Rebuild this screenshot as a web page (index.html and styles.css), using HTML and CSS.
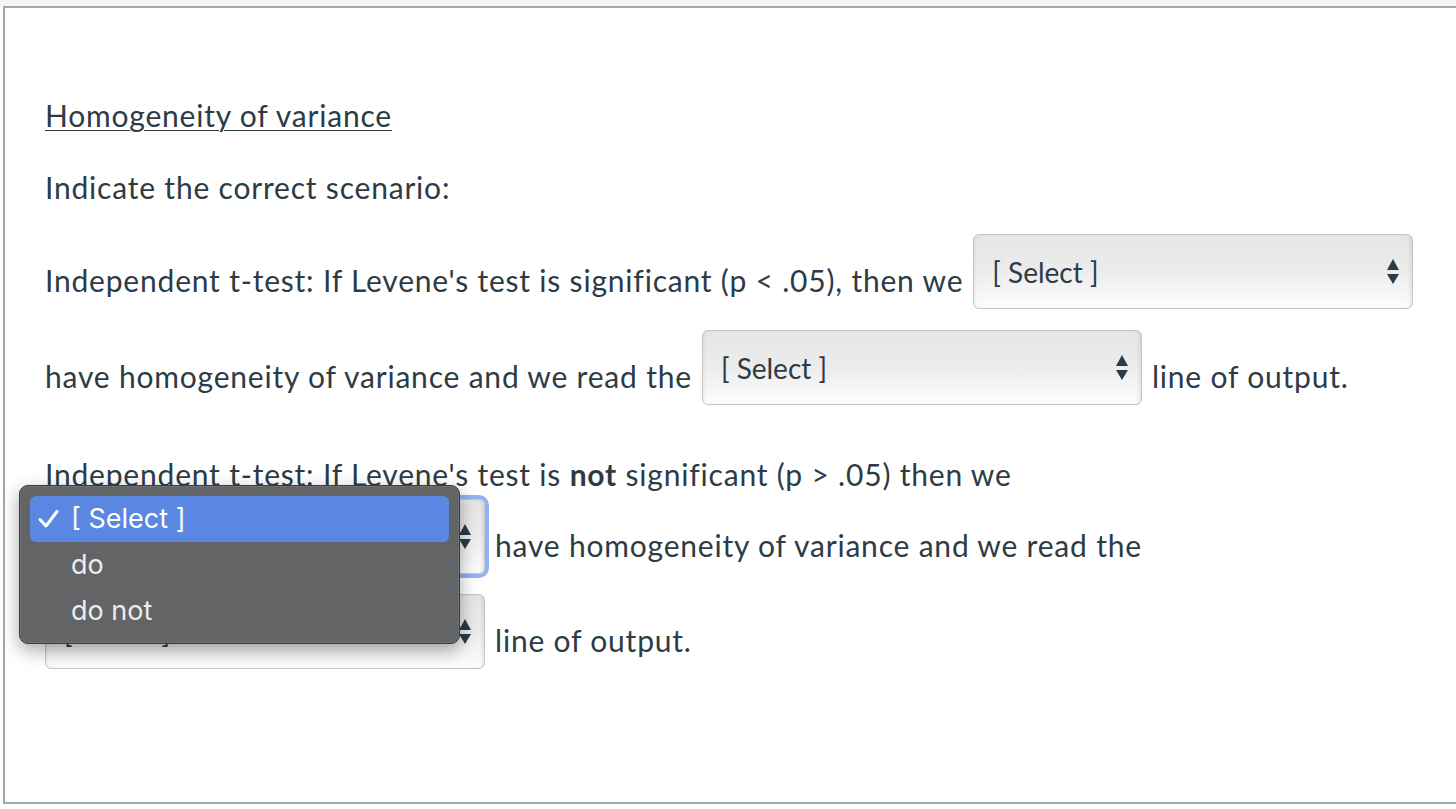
FILE: index.html
```html
<!DOCTYPE html>
<html lang="en">
<head>
<meta charset="utf-8">
<title>Homogeneity of variance</title>
<link rel="stylesheet" href="styles.css">
</head>
<body>
<div class="topbar"></div>
<div class="frame">
  <p class="heading"><span class="underline">Homogeneity of variance</span></p>
  <p class="text intro">Indicate the correct scenario:</p>

  <div class="question q1">
    <div class="row">
      <span class="txt">Independent t-test: If Levene's test is significant (p &lt; .05), then we</span>
      <div class="select">
        <span class="sel-label">[ Select ]</span>
        <svg class="arrows" width="12" height="26" viewBox="0 0 12 26"><polygon points="6,0 12,11 0,11"/><polygon points="0,15 12,15 6,25"/></svg>
      </div>
    </div>
    <div class="row">
      <span class="txt">have homogeneity of variance and we read the</span>
      <div class="select">
        <span class="sel-label">[ Select ]</span>
        <svg class="arrows" width="12" height="26" viewBox="0 0 12 26"><polygon points="6,0 12,11 0,11"/><polygon points="0,15 12,15 6,25"/></svg>
      </div>
      <span class="txt">line of output.</span>
    </div>
  </div>

  <div class="question q2">
    <p class="text line">Independent t-test: If Levene's test is <strong>not</strong> significant (p &gt; .05) then we</p>
    <div class="row">
      <div class="select focused">
        <span class="sel-label">[ Select ]</span>
        <svg class="arrows" width="12" height="26" viewBox="0 0 12 26"><polygon points="6,0 12,11 0,11"/><polygon points="0,15 12,15 6,25"/></svg>
        <div class="popup">
          <div class="opt active"><span class="check"><svg width="21" height="20" viewBox="0 0 21 20"><polyline points="2,10.5 8,17 19,2.5"/></svg></span><span>[ Select ]</span></div>
          <div class="opt"><span class="check"></span><span>do</span></div>
          <div class="opt"><span class="check"></span><span>do not</span></div>
        </div>
      </div>
      <span class="txt">have homogeneity of variance and we read the</span>
    </div>
    <div class="row">
      <div class="select">
        <span class="sel-label">[ Select ]</span>
        <svg class="arrows" width="12" height="26" viewBox="0 0 12 26"><polygon points="6,0 12,11 0,11"/><polygon points="0,15 12,15 6,25"/></svg>
      </div>
      <span class="txt">line of output.</span>
    </div>
  </div>
</div>
</body>
</html>
```
FILE: styles.css
```css
html, body {
  margin: 0;
  padding: 0;
  background: #ffffff;
}

body {
  font-family: Lato, "Helvetica Neue", Arial, sans-serif;
  font-size: 30px;
  letter-spacing: 0.8px;
  line-height: 44px;
  color: #2d3b45;
}

.topbar {
  height: 6px;
  background: #f4f4f4;
}

.frame {
  box-sizing: border-box;
  height: 798px;
  margin-left: 3px;
  border: 2px solid #a6a6a6;
  border-right: none;
  padding: 85px 0 0 40px;
}

p {
  margin: 0;
}

.underline {
  text-decoration: underline;
  text-underline-offset: 3px;
  text-decoration-thickness: 1px;
}

.intro {
  margin-top: 28px;
}

.q1 {
  margin-top: 25px;
}

.q2 {
  margin-top: 47px;
}

.row {
  display: flex;
  align-items: flex-start;
  gap: 10px;
}

.q1 .row + .row {
  margin-top: 21px;
}

.q2 .line + .row {
  margin-top: 3px;
}

.q2 .row + .row {
  margin-top: 20px;
}

.txt {
  margin-top: 24px;
  white-space: nowrap;
}

.select {
  position: relative;
  box-sizing: border-box;
  flex: none;
  width: 440px;
  height: 75px;
  display: flex;
  align-items: center;
  padding-left: 18px;
  border: 1px solid #c6c6c6;
  border-radius: 6px;
  background: linear-gradient(to bottom, #e6e6e6 0%, #ebebeb 45%, #f6f6f6 80%, #fdfdfd 100%);
  box-shadow: inset -3px 0 4px -2px rgba(0, 0, 0, 0.12), inset 3px 0 4px -2px rgba(0, 0, 0, 0.06);
  font-size: 28px;
  letter-spacing: 0;
}

.select.focused {
  box-shadow: 0 0 0 4px #8fb4f2, inset -3px 0 4px -2px rgba(0, 0, 0, 0.12);
}

.sel-label {
  white-space: nowrap;
}

.arrows {
  margin-left: auto;
  margin-right: 13px;
  fill: #2d3b45;
}

.popup {
  position: absolute;
  left: -27px;
  top: -15px;
  z-index: 5;
  box-sizing: border-box;
  width: 441px;
  height: 159px;
  padding: 10px;
  background: #636466;
  border: 1px solid #3b3b3c;
  border-radius: 9px;
  box-shadow: 0 6px 18px rgba(0, 0, 0, 0.35), inset 0 0 0 1px rgba(255, 255, 255, 0.08);
  font-family: Inter, "Helvetica Neue", Arial, sans-serif;
  font-size: 27px;
  line-height: 46px;
  color: #ececec;
}

.opt {
  height: 46px;
  display: flex;
  align-items: center;
  border-radius: 6px;
}

.opt.active {
  background: #5a87e1;
  color: #ffffff;
}

.check {
  width: 41px;
  padding-left: 8px;
  box-sizing: border-box;
  flex: none;
  display: flex;
  align-items: center;
}

.check svg {
  fill: none;
  stroke: #ffffff;
  stroke-width: 3;
  stroke-linecap: round;
  stroke-linejoin: round;
}
```
